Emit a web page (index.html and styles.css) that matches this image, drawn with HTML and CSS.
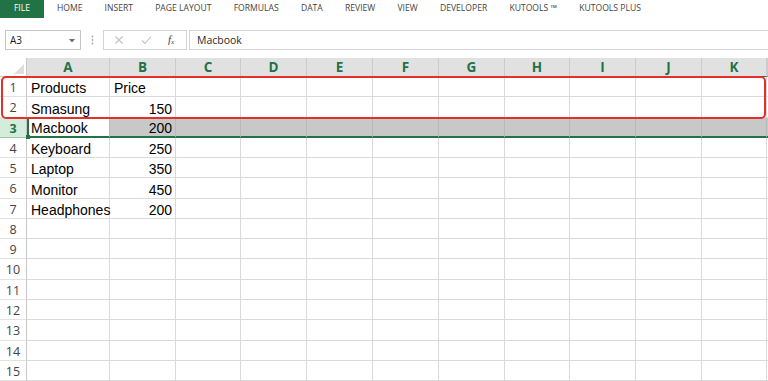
FILE: index.html
```html
<!DOCTYPE html>
<html>
<head>
<meta charset="utf-8">
<link rel="stylesheet" href="styles.css">
</head>
<body>
<div class="tabs">
  <div class="tab file">FILE</div>
  <div class="tab">HOME</div>
  <div class="tab">INSERT</div>
  <div class="tab">PAGE LAYOUT</div>
  <div class="tab">FORMULAS</div>
  <div class="tab">DATA</div>
  <div class="tab">REVIEW</div>
  <div class="tab">VIEW</div>
  <div class="tab">DEVELOPER</div>
  <div class="tab">KUTOOLS ™</div>
  <div class="tab">KUTOOLS PLUS</div>
</div>

<div class="fbar">
  <div class="namebox">
    <span>A3</span>
    <svg class="dd" width="6" height="4" viewBox="0 0 6 4"><path d="M0 0H6L3 3.5Z" fill="#6b6b6b"/></svg>
  </div>
  <div class="grip">
    <svg width="3" height="10" viewBox="0 0 3 10"><circle cx="1.5" cy="1.5" r="0.9" fill="#a8a8a8"/><circle cx="1.5" cy="5" r="0.9" fill="#a8a8a8"/><circle cx="1.5" cy="8.5" r="0.9" fill="#a8a8a8"/></svg>
  </div>
  <div class="fxbox">
    <svg class="ico" width="10" height="10" viewBox="0 0 10 10"><path d="M1.5 1.5L8.5 8.5M8.5 1.5L1.5 8.5" stroke="#c2c2c2" stroke-width="1.1" fill="none"/></svg>
    <svg class="ico" width="11" height="10" viewBox="0 0 11 10"><path d="M1 5.5L4 8.5L10 1.5" stroke="#c2c2c2" stroke-width="1.1" fill="none"/></svg>
    <span class="fx"><i>f</i><sub>x</sub></span>
  </div>
  <div class="formula">Macbook</div>
</div>

<div class="sheet">
  <div class="row hdr h19">
    <div class="corner"><svg width="10" height="10" viewBox="0 0 10 10"><path d="M10 0V10H0Z" fill="#dedede"/></svg></div>
    <div class="ch">A</div><div class="ch">B</div><div class="ch">C</div><div class="ch">D</div><div class="ch">E</div><div class="ch">F</div><div class="ch">G</div><div class="ch">H</div><div class="ch">I</div><div class="ch">J</div><div class="ch">K</div><div class="ch"></div>
  </div>
  <div class="row h20">
    <div class="rh">1</div><div class="c">Products</div><div class="c">Price</div><div class="c"></div><div class="c"></div><div class="c"></div><div class="c"></div><div class="c"></div><div class="c"></div><div class="c"></div><div class="c"></div><div class="c"></div><div class="c"></div>
  </div>
  <div class="row h21">
    <div class="rh">2</div><div class="c">Smasung</div><div class="c num">150</div><div class="c"></div><div class="c"></div><div class="c"></div><div class="c"></div><div class="c"></div><div class="c"></div><div class="c"></div><div class="c"></div><div class="c"></div><div class="c"></div>
  </div>
  <div class="row h20 sel">
    <div class="rh">3</div><div class="c active">Macbook</div><div class="c num">200</div><div class="c"></div><div class="c"></div><div class="c"></div><div class="c"></div><div class="c"></div><div class="c"></div><div class="c"></div><div class="c"></div><div class="c"></div><div class="c"></div>
  </div>
  <div class="row h20">
    <div class="rh">4</div><div class="c">Keyboard</div><div class="c num">250</div><div class="c"></div><div class="c"></div><div class="c"></div><div class="c"></div><div class="c"></div><div class="c"></div><div class="c"></div><div class="c"></div><div class="c"></div><div class="c"></div>
  </div>
  <div class="row h20">
    <div class="rh">5</div><div class="c">Laptop</div><div class="c num">350</div><div class="c"></div><div class="c"></div><div class="c"></div><div class="c"></div><div class="c"></div><div class="c"></div><div class="c"></div><div class="c"></div><div class="c"></div><div class="c"></div>
  </div>
  <div class="row h21">
    <div class="rh">6</div><div class="c">Monitor</div><div class="c num">450</div><div class="c"></div><div class="c"></div><div class="c"></div><div class="c"></div><div class="c"></div><div class="c"></div><div class="c"></div><div class="c"></div><div class="c"></div><div class="c"></div>
  </div>
  <div class="row h20">
    <div class="rh">7</div><div class="c">Headphones</div><div class="c num">200</div><div class="c"></div><div class="c"></div><div class="c"></div><div class="c"></div><div class="c"></div><div class="c"></div><div class="c"></div><div class="c"></div><div class="c"></div><div class="c"></div>
  </div>
  <div class="row h20">
    <div class="rh">8</div><div class="c"></div><div class="c"></div><div class="c"></div><div class="c"></div><div class="c"></div><div class="c"></div><div class="c"></div><div class="c"></div><div class="c"></div><div class="c"></div><div class="c"></div><div class="c"></div>
  </div>
  <div class="row h20">
    <div class="rh">9</div><div class="c"></div><div class="c"></div><div class="c"></div><div class="c"></div><div class="c"></div><div class="c"></div><div class="c"></div><div class="c"></div><div class="c"></div><div class="c"></div><div class="c"></div><div class="c"></div>
  </div>
  <div class="row h21">
    <div class="rh">10</div><div class="c"></div><div class="c"></div><div class="c"></div><div class="c"></div><div class="c"></div><div class="c"></div><div class="c"></div><div class="c"></div><div class="c"></div><div class="c"></div><div class="c"></div><div class="c"></div>
  </div>
  <div class="row h20">
    <div class="rh">11</div><div class="c"></div><div class="c"></div><div class="c"></div><div class="c"></div><div class="c"></div><div class="c"></div><div class="c"></div><div class="c"></div><div class="c"></div><div class="c"></div><div class="c"></div><div class="c"></div>
  </div>
  <div class="row h20">
    <div class="rh">12</div><div class="c"></div><div class="c"></div><div class="c"></div><div class="c"></div><div class="c"></div><div class="c"></div><div class="c"></div><div class="c"></div><div class="c"></div><div class="c"></div><div class="c"></div><div class="c"></div>
  </div>
  <div class="row h21">
    <div class="rh">13</div><div class="c"></div><div class="c"></div><div class="c"></div><div class="c"></div><div class="c"></div><div class="c"></div><div class="c"></div><div class="c"></div><div class="c"></div><div class="c"></div><div class="c"></div><div class="c"></div>
  </div>
  <div class="row h20">
    <div class="rh">14</div><div class="c"></div><div class="c"></div><div class="c"></div><div class="c"></div><div class="c"></div><div class="c"></div><div class="c"></div><div class="c"></div><div class="c"></div><div class="c"></div><div class="c"></div><div class="c"></div>
  </div>
  <div class="row h20">
    <div class="rh">15</div><div class="c"></div><div class="c"></div><div class="c"></div><div class="c"></div><div class="c"></div><div class="c"></div><div class="c"></div><div class="c"></div><div class="c"></div><div class="c"></div><div class="c"></div><div class="c"></div>
  </div>
  <div class="redbox"></div>
</div>
</body>
</html>
```

FILE: styles.css
```css
* { box-sizing: border-box; }
html, body {
  margin: 0;
  padding: 0;
  background: #ffffff;
  overflow: hidden;
}
body {
  width: 768px;
  height: 381px;
  font-family: "Liberation Sans", Arial, sans-serif;
}

/* ribbon tabs */
.tabs {
  display: flex;
  height: 18px;
  font-family: "Open Sans", "Liberation Sans", sans-serif;
  font-size: 8.6px;
  color: #444444;
}
.tab {
  line-height: 17px;
  padding: 0 11.1px;
  white-space: nowrap;
}
.tab.file {
  width: 44px;
  padding: 0;
  margin-right: 1.8px;
  text-align: center;
  background: #217346;
  color: #ffffff;
}

/* formula bar */
.fbar {
  display: flex;
  align-items: stretch;
  height: 20px;
  margin-top: 12px;
  font-family: "Open Sans", "Liberation Sans", sans-serif;
  font-size: 10px;
  color: #222222;
}
.namebox {
  width: 76px;
  margin-left: 5px;
  border: 1px solid #c6c6c6;
  display: flex;
  align-items: center;
  justify-content: space-between;
  padding: 0 5px 0 4px;
}
.namebox span { font-size: 10px; color: #1a1a1a; }
.dd { margin-top: 1px; }
.grip {
  width: 22px;
  display: flex;
  align-items: center;
  justify-content: center;
}
.fxbox {
  width: 84px;
  border: 1px solid #d4d4d4;
  display: flex;
  align-items: center;
  padding-left: 10px;
}
.fxbox .ico:first-child { margin-right: 17px; }
.fxbox .ico:nth-child(2) { margin-right: 16px; }
.fx {
  font-family: "Liberation Serif", serif;
  font-size: 11px;
  color: #444444;
  line-height: 1;
}
.fx sub { font-size: 7px; font-style: italic; vertical-align: -1px; }
.formula {
  flex: 1;
  margin-left: 2px;
  border: 1px solid #d4d4d4;
  border-right: none;
  padding-left: 7px;
  display: flex;
  align-items: center;
  font-size: 10.5px;
  color: #2a2a2a;
}

/* sheet */
.sheet {
  position: relative;
  margin-top: 8px;
  display: flex;
  flex-direction: column;
}
.row {
  display: grid;
  grid-template-columns: 27px 83px 66px 65px 66px 66px 66px 66px 65px 66px 66px 65px 1px;
}
.h19 { height: 19px; }
.h20 { height: 20px; }
.h21 { height: 21px; }

.corner {
  background: #ffffff;
  border-right: 1px solid #c8c8c8;
  border-bottom: 1px solid #c8c8c8;
  display: flex;
  align-items: flex-end;
  justify-content: flex-end;
  padding: 0 2px 2px 0;
}
.ch {
  background: #e1e1e1;
  border-right: 1px solid #cbcbcb;
  border-bottom: 1px solid #217346;
  color: #217346;
  font-family: "Open Sans", "Liberation Sans", sans-serif;
  font-weight: 700;
  font-size: 13.5px;
  display: flex;
  align-items: center;
  justify-content: center;
  line-height: 1;
  padding-top: 1px;
}
.rh {
  background: #ffffff;
  border-right: 1px solid #c8c8c8;
  border-bottom: 1px solid #e2e2e2;
  color: #444444;
  font-family: "Open Sans", "Liberation Sans", sans-serif;
  font-size: 12.5px;
  display: flex;
  align-items: center;
  justify-content: center;
  line-height: 1;
  padding-top: 3px;
}
.c {
  border-right: 1px solid #dadada;
  border-bottom: 1px solid #dadada;
  font-size: 14px;
  color: #000000;
  padding: 3px 3px 0 4px;
  display: flex;
  align-items: center;
  white-space: nowrap;
  line-height: 1;
}
.c.num { justify-content: flex-end; }

/* selected row 3 */
.sel .rh {
  background: #d3ecdc;
  color: #217346;
  font-weight: 700;
  border-bottom: 1px solid #9fc9ae;
}
.sel .c {
  background: #c8c8c8;
  border-right-color: #b9b9b9;
  border-bottom: 2px solid #217346;
  padding-top: 2px;
}
.sel .c.active {
  background: #ffffff;
  border-left: 2px solid #217346;
  padding-left: 2px;
  position: relative;
}
.sel .c.active::after {
  content: "";
  position: absolute;
  left: -3px;
  bottom: -3px;
  width: 4px;
  height: 4px;
  background: #217346;
}

/* red highlight box */
.redbox {
  position: absolute;
  left: 1px;
  top: 18px;
  width: 765px;
  height: 43px;
  border: 2px solid #e3302b;
  border-radius: 5px;
  pointer-events: none;
}
```
